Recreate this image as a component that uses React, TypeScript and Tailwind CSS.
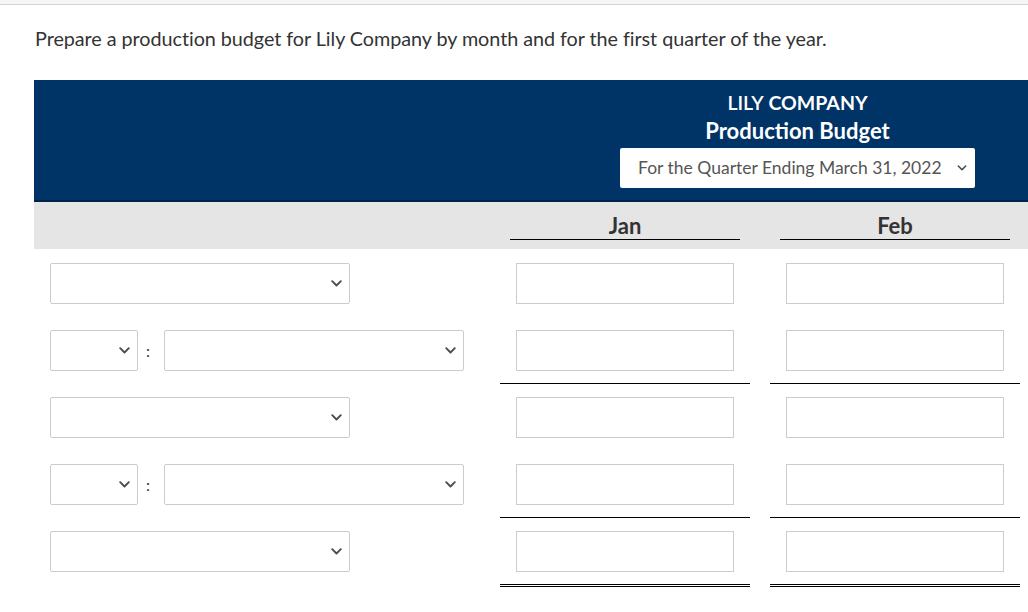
import React from 'react';

const font = "font-['Lato','Open_Sans',sans-serif]";

function Chevron({ small = false }: { small?: boolean }) {
  return (
    <svg
      width={small ? 10 : 11}
      height={small ? 6 : 7}
      viewBox="0 0 11 7"
      fill="none"
      className="shrink-0"
    >
      <path d="M1.2 1.2 L5.5 5.5 L9.8 1.2" stroke="#4d4d4d" strokeWidth="1.9" strokeLinecap="round" strokeLinejoin="round" />
    </svg>
  );
}

function SelectBox({ width }: { width: string }) {
  return (
    <div className={`${width} h-[41px] border border-[#cccccc] rounded-[2px] bg-white flex items-center justify-end pr-[7px]`}>
      <Chevron />
    </div>
  );
}

function NumCell({ rule, gap = 'mr-[20px]' }: { rule?: 'single' | 'double'; gap?: string }) {
  const line =
    rule === 'single'
      ? 'h-[68px] border-b border-black'
      : rule === 'double'
      ? 'h-[70px] border-b-[3px] border-double border-black'
      : 'h-[67px]';
  return (
    <div className={`w-[250px] shrink-0 ${gap} pl-[16px] pt-[14px] ${line}`}>
      <div className="w-[218px] h-[41px] border border-[#cccccc] bg-white" />
    </div>
  );
}

type Row = { kind: 'single' | 'pair'; rule?: 'single' | 'double' };

const rows: Row[] = [
  { kind: 'single' },
  { kind: 'pair', rule: 'single' },
  { kind: 'single' },
  { kind: 'pair', rule: 'single' },
  { kind: 'single', rule: 'double' },
];

export default function App() {
  return (
    <div className={`w-[1028px] h-[612px] bg-white overflow-hidden ${font} text-[#333333]`}>
      {/* top strip */}
      <div className="h-[5px] bg-[#f5f5f5] border-b border-[#d4d4d4]" />

      <p className="ml-[35px] mt-[20px] text-[19.8px] leading-[26px] tracking-[-0.05px]">
        Prepare a production budget for Lily Company by month and for the first quarter of the year.
      </p>

      {/* header block */}
      <div className="ml-[34px] mt-[29px] h-[122px] bg-[#003366] border-b-2 border-[#00234a] flex">
        <div className="ml-[586px] w-[355px] pt-[9px] flex flex-col items-center text-white">
          <div className="text-[19.5px] leading-[28px] font-bold">
            <span className="font-semibold">LILY</span> COMPANY
          </div>
          <div className="text-[22px] leading-[27px] font-bold">Production Budget</div>
          <div className="mt-[4px] w-[355px] h-[40px] bg-white rounded-[2px] flex items-center justify-between pl-[18px] pr-[8px] text-[#555555]">
            <span className="text-[17.5px] leading-none">For the Quarter Ending March 31, 2022</span>
            <Chevron small />
          </div>
        </div>
      </div>

      {/* column labels */}
      <div className="ml-[34px] h-[47px] bg-[#e5e5e5] flex">
        <div className="w-[466px] shrink-0" />
        {['Jan', 'Feb'].map(m => (
          <div key={m} className="w-[250px] shrink-0 mr-[20px] px-[10px] pt-[11px]">
            <div className="h-[27px] border-b border-black text-center text-[22px] leading-[26px] font-bold text-[#333333]">
              {m}
            </div>
          </div>
        ))}
      </div>

      {/* body rows: the number cells of ruled rows reach 1-3px lower, like the rules on the original */}
      <div className="ml-[34px]">
        {rows.map((r, i) => (
          <div key={i} className="flex h-[67px] overflow-visible">
            <div className="w-[466px] shrink-0 h-[67px] pl-[16px] pt-[14px] flex items-start">
              {r.kind === 'single' ? (
                <SelectBox width="w-[300px]" />
              ) : (
                <div className="flex items-center">
                  <SelectBox width="w-[88px]" />
                  <span className="w-[26px] pl-[8px] text-left text-[16px] leading-none">:</span>
                  <SelectBox width="w-[300px]" />
                </div>
              )}
            </div>
            <NumCell rule={r.rule} />
            <NumCell rule={r.rule} gap="mr-0" />
          </div>
        ))}
      </div>
    </div>
  );
}
